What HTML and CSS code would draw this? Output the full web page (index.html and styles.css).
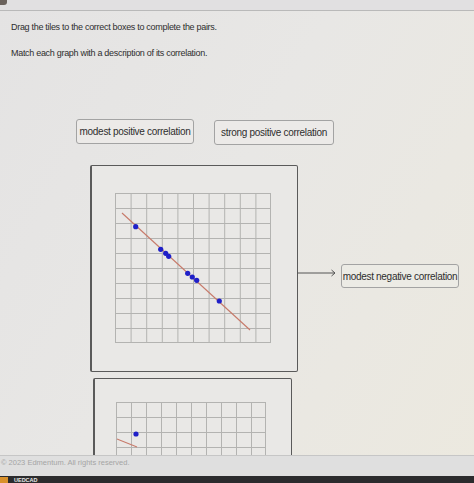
FILE: index.html
```html
<!DOCTYPE html>
<html lang="en">
<head>
<meta charset="utf-8">
<title>Match graphs</title>
<link rel="stylesheet" href="styles.css">
</head>
<body>
<div class="topbar"><span class="corner"></span></div>
<main class="content">
  <p class="instr first">Drag the tiles to the correct boxes to complete the pairs.</p>
  <p class="instr">Match each graph with a description of its correlation.</p>
  <div class="tiles">
    <div class="tile">modest positive correlation</div>
    <div class="tile t2">strong positive correlation</div>
  </div>
  <div class="pair">
    <div class="card c1">
      <svg class="grid g1" width="156" height="150" viewBox="0 0 156 150">
        <g stroke="#b3b3b1" stroke-width="1">
          <line x1="0.5" y1="0" x2="0.5" y2="150"/>
          <line x1="16.1" y1="0" x2="16.1" y2="150"/>
          <line x1="31.7" y1="0" x2="31.7" y2="150"/>
          <line x1="47.3" y1="0" x2="47.3" y2="150"/>
          <line x1="62.9" y1="0" x2="62.9" y2="150"/>
          <line x1="78.5" y1="0" x2="78.5" y2="150"/>
          <line x1="94.1" y1="0" x2="94.1" y2="150"/>
          <line x1="109.7" y1="0" x2="109.7" y2="150"/>
          <line x1="125.3" y1="0" x2="125.3" y2="150"/>
          <line x1="140.9" y1="0" x2="140.9" y2="150"/>
          <line x1="155.5" y1="0" x2="155.5" y2="150"/>
          <line x1="0" y1="0.5" x2="156" y2="0.5"/>
          <line x1="0" y1="15.5" x2="156" y2="15.5"/>
          <line x1="0" y1="30.5" x2="156" y2="30.5"/>
          <line x1="0" y1="45.5" x2="156" y2="45.5"/>
          <line x1="0" y1="60.5" x2="156" y2="60.5"/>
          <line x1="0" y1="75.5" x2="156" y2="75.5"/>
          <line x1="0" y1="90.5" x2="156" y2="90.5"/>
          <line x1="0" y1="105.5" x2="156" y2="105.5"/>
          <line x1="0" y1="120.5" x2="156" y2="120.5"/>
          <line x1="0" y1="135.5" x2="156" y2="135.5"/>
          <line x1="0" y1="149.5" x2="156" y2="149.5"/>
        </g>
        <line x1="7" y1="20" x2="135" y2="137" stroke="#c77a6a" stroke-width="1.1"/>
        <g fill="#1f1fc8">
          <circle cx="20.7" cy="33.7" r="2.6"/>
          <circle cx="45.7" cy="56.3" r="2.6"/>
          <circle cx="50.7" cy="60.3" r="2.6"/>
          <circle cx="53.7" cy="63.3" r="2.6"/>
          <circle cx="72.7" cy="80.3" r="2.6"/>
          <circle cx="77.3" cy="84" r="2.6"/>
          <circle cx="81.7" cy="87.3" r="2.6"/>
          <circle cx="104.3" cy="108" r="2.6"/>
        </g>
      </svg>
    </div>
    <svg class="arrow" width="40" height="10" viewBox="0 0 40 10">
      <line x1="0" y1="5" x2="38" y2="5" stroke="#555" stroke-width="1"/>
      <polyline points="34.5,2 38,5 34.5,8" fill="none" stroke="#555" stroke-width="1"/>
    </svg>
    <div class="tile t3">modest negative correlation</div>
  </div>
  <div class="card c2">
    <svg class="grid g2" width="150" height="60" viewBox="0 0 150 60">
      <g stroke="#b3b3b1" stroke-width="1">
        <line x1="0.5" y1="0" x2="0.5" y2="60"/>
        <line x1="15.5" y1="0" x2="15.5" y2="60"/>
        <line x1="30.5" y1="0" x2="30.5" y2="60"/>
        <line x1="45.5" y1="0" x2="45.5" y2="60"/>
        <line x1="60.5" y1="0" x2="60.5" y2="60"/>
        <line x1="75.5" y1="0" x2="75.5" y2="60"/>
        <line x1="90.5" y1="0" x2="90.5" y2="60"/>
        <line x1="105.5" y1="0" x2="105.5" y2="60"/>
        <line x1="120.5" y1="0" x2="120.5" y2="60"/>
        <line x1="135.5" y1="0" x2="135.5" y2="60"/>
        <line x1="149.5" y1="0" x2="149.5" y2="60"/>
        <line x1="0" y1="0.5" x2="150" y2="0.5"/>
        <line x1="0" y1="15.5" x2="150" y2="15.5"/>
        <line x1="0" y1="30.5" x2="150" y2="30.5"/>
        <line x1="0" y1="45.5" x2="150" y2="45.5"/>
      </g>
      <line x1="1" y1="37" x2="21" y2="45" stroke="#c77a6a" stroke-width="1.1"/>
      <circle cx="20" cy="32" r="2.6" fill="#1f1fc8"/>
    </svg>
  </div>
</main>
<footer class="footer">© 2023 Edmentum. All rights reserved.</footer>
<div class="taskbar"><span class="tb-icon"></span><span class="tb-text">UEDCAD</span></div>
</body>
</html>
```
FILE: styles.css
```css
html, body {
  margin: 0;
  padding: 0;
}
body {
  width: 474px;
  height: 483px;
  overflow: hidden;
  font-family: "Liberation Sans", Arial, sans-serif;
  color: #333;
  background: linear-gradient(120deg, #e4e3e3 0%, #e8e7e5 45%, #ece9df 100%);
}
.topbar {
  height: 10px;
  background: #e1e0e1;
  border-bottom: 1px solid #b9b9b9;
  position: relative;
}
.corner {
  position: absolute;
  left: 0;
  top: 0;
  width: 7px;
  height: 5px;
  background: #6a625c;
  border-bottom-right-radius: 3px;
}
.content {
  height: 444px;
  overflow: hidden;
  padding: 10px 0 0 11px;
  box-sizing: border-box;
}
.instr {
  margin: 0;
  font-size: 9px;
  line-height: 12px;
  letter-spacing: -0.3px;
  color: #2e2e2e;
}
.instr.first {
  margin-bottom: 14px;
}
.tiles {
  display: flex;
  gap: 20px;
  margin: 60px 0 0 65px;
}
.tile {
  box-sizing: border-box;
  width: 118px;
  height: 25px;
  border: 1px solid #a3a3a3;
  border-radius: 3px;
  background: #eceae8;
  font-size: 10px;
  letter-spacing: -0.3px;
  color: #2e2e2e;
  display: flex;
  align-items: center;
  justify-content: center;
  white-space: nowrap;
}
.t2 {
  width: 120px;
  margin-top: 1px;
}
.pair {
  display: flex;
  align-items: flex-start;
  margin: 20px 0 0 79px;
}
.card {
  box-sizing: border-box;
  border: 1px solid #5a5a5a;
  border-left-width: 2px;
  border-radius: 2px;
  background: #e9e8e6;
}
.c1 {
  width: 208px;
  height: 207px;
  padding: 27px 0 0 23px;
}
.grid {
  display: block;
}
.arrow {
  display: block;
  margin-top: 103px;
  margin-left: -1px;
}
.t3 {
  margin-top: 99px;
  margin-left: 4px;
  height: 24px;
  background: #ecebe5;
}
.c2 {
  width: 199px;
  height: 90px;
  margin: 6px 0 0 82px;
  padding: 23px 0 0 21px;
}
.footer {
  height: 21px;
  box-sizing: border-box;
  border-top: 1px solid #c6c6c6;
  background: #dfdfdf;
  font-size: 7.5px;
  line-height: 14px;
  color: #a5a5a5;
  padding-left: 1px;
  white-space: nowrap;
}
.taskbar {
  height: 7px;
  background: #2b2b2d;
  display: flex;
  align-items: flex-start;
  gap: 6px;
  overflow: hidden;
}
.tb-icon {
  width: 8px;
  height: 6px;
  margin-top: 1px;
  background: #d9912c;
}
.tb-text {
  color: #e8e8e8;
  font-size: 5.5px;
  font-weight: bold;
  line-height: 6px;
  margin-top: 1px;
}
```
